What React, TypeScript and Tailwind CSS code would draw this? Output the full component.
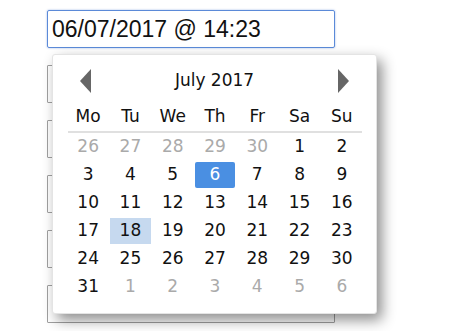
import React from 'react';

const weekdays = ['Mo', 'Tu', 'We', 'Th', 'Fr', 'Sa', 'Su'];

type Day = { n: number; other?: boolean };

const buildWeeks = (): Day[][] => {
  const days: Day[] = [];
  [26, 27, 28, 29, 30].forEach((n) => days.push({ n, other: true }));
  for (let i = 1; i <= 31; i++) days.push({ n: i });
  [1, 2, 3, 4, 5, 6].forEach((n) => days.push({ n, other: true }));
  const weeks: Day[][] = [];
  for (let i = 0; i < days.length; i += 7) weeks.push(days.slice(i, i + 7));
  return weeks;
};

const Arrow = ({ dir }: { dir: 'left' | 'right' }) => (
  <svg width="12" height="24" viewBox="0 0 12 24" className="block">
    {dir === 'left' ? (
      <polygon points="11,0 11,24 0,12" fill="#666666" />
    ) : (
      <polygon points="1,0 1,24 12,12" fill="#666666" />
    )}
  </svg>
);

const Calendar = () => {
  const weeks = buildWeeks();
  return (
    <div
      className="absolute left-[52px] top-[54px] w-[325px] h-[260px] bg-white rounded-[3px] border border-[#e4e4e4] shadow-[5px_6px_14px_rgba(0,0,0,0.45)] pt-[12px] px-[15px]"
      style={{ fontFamily: '"DejaVu Sans", Verdana, sans-serif' }}
    >
      {/* header */}
      <div className="h-[28px] flex items-center justify-between px-[12px]">
        <Arrow dir="left" />
        <span className="text-[17px] text-[#111]">July 2017</span>
        <Arrow dir="right" />
      </div>

      <div className="mt-[9px] w-[294px] grid grid-cols-7 gap-x-[2px] border-b-2 border-[#e0e0e0] pb-[1px]">
        {weekdays.map((d) => (
          <div key={d} className="h-[26px] flex items-center justify-center text-[17px] text-[#111]">
            {d}
          </div>
        ))}
      </div>

      <div className="mt-[1px] w-[294px] grid grid-cols-7 gap-x-[2px] gap-y-[2px]">
        {weeks.flat().map((d, i) => {
          const selected = !d.other && d.n === 6;
          const today = !d.other && d.n === 18;
          let cls = 'text-[#111]';
          if (d.other) cls = 'text-[#aaaaaa]';
          if (selected) cls = 'bg-[#4a8fe2] text-white rounded-[2px]';
          if (today) cls = 'bg-[#c6d9ef] text-[#111]';
          return (
            <div key={i} className={`h-[26px] flex items-center justify-center text-[17px] ${cls}`}>
              {d.n}
            </div>
          );
        })}
      </div>
    </div>
  );
};

export default function App() {
  return (
    <div className="relative w-[453px] h-[331px] bg-white overflow-hidden">
      <div className="pl-[47px] pt-[10px] flex flex-col gap-[17px]">
        <div className="w-[288px] h-[38px] border border-[#5b8ad8] rounded-[2px] shadow-[0_0_2px_rgba(70,120,210,0.6)] flex items-center pl-[4px]">
          <span
            className="text-[23px] text-[#111] leading-none"
            style={{ fontFamily: '"Liberation Sans", Arial, sans-serif' }}
          >
            06/07/2017 @ 14:23
          </span>
        </div>
        {[0, 1, 2, 3, 4].map((i) => (
          <div key={i} className="w-[288px] h-[38px] border border-[#a0a0a0] rounded-[1px]" />
        ))}
      </div>
      <Calendar />
    </div>
  );
}
